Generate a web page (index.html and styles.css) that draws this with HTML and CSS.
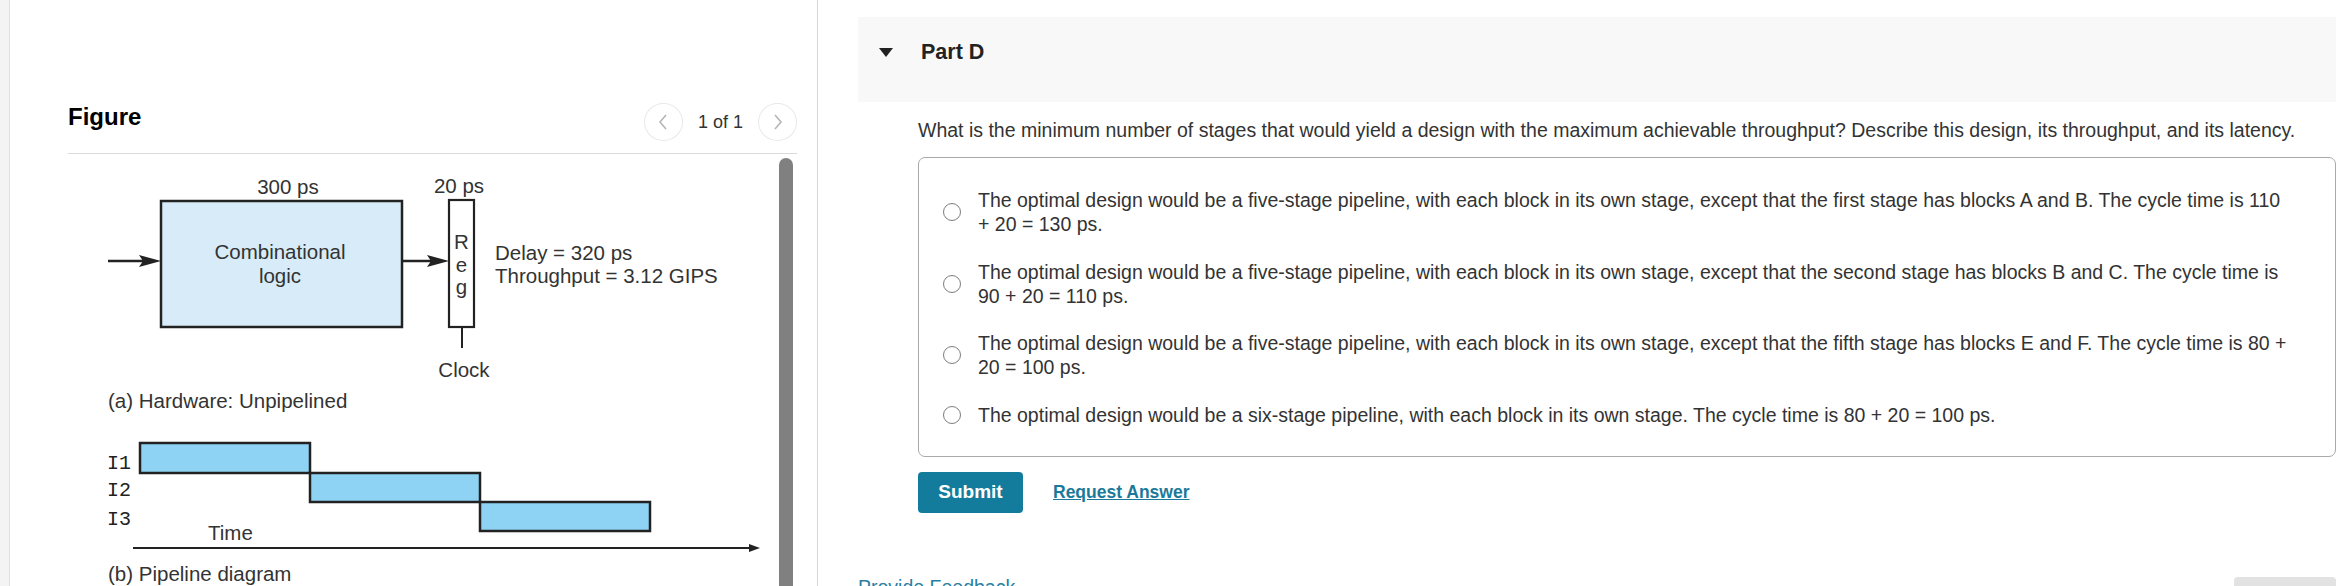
FILE: index.html
```html
<!DOCTYPE html>
<html lang="en">
<head>
<meta charset="utf-8">
<title>Part D</title>
<link rel="stylesheet" href="styles.css">
</head>
<body>
<div class="page">
  <div class="gutter"></div>
  <aside class="figure-panel">
    <div class="fig-header">
      <h2 class="fig-title">Figure</h2>
      <div class="pager">
        <button class="pager-btn" aria-label="Previous">
          <svg width="12" height="18" viewBox="0 0 12 18"><path d="M9 2 L3 9 L9 16" class="chev"/></svg>
        </button>
        <span class="pager-count">1 of 1</span>
        <button class="pager-btn" aria-label="Next">
          <svg width="12" height="18" viewBox="0 0 12 18"><path d="M3 2 L9 9 L3 16" class="chev"/></svg>
        </button>
      </div>
    </div>
    <div class="fig-body">
      <svg class="diagram" width="711" height="432" viewBox="68 154 711 432">
        <text class="dg" x="288" y="194" text-anchor="middle">300 ps</text>
        <text class="dg" x="459" y="193" text-anchor="middle">20 ps</text>
        <line class="wire" x1="108" y1="261" x2="145" y2="261"/>
        <polygon class="head" points="139,255 161,261 139,267 143,261"/>
        <rect class="comb" x="161" y="201" width="241" height="126"/>
        <text class="dg" x="280" y="259" text-anchor="middle">Combinational</text>
        <text class="dg" x="280" y="283" text-anchor="middle">logic</text>
        <line class="wire" x1="402" y1="261" x2="433" y2="261"/>
        <polygon class="head" points="427,255 449,261 427,267 431,261"/>
        <rect class="reg" x="449" y="200" width="25" height="127"/>
        <text class="dg" x="461.5" y="249" text-anchor="middle">R</text>
        <text class="dg" x="461.5" y="272" text-anchor="middle">e</text>
        <text class="dg" x="461.5" y="294" text-anchor="middle">g</text>
        <line class="thin" x1="462" y1="327" x2="462" y2="348"/>
        <text class="dg" x="464" y="377" text-anchor="middle">Clock</text>
        <text class="dg" x="495" y="260">Delay = 320 ps</text>
        <text class="dg" x="495" y="283">Throughput = 3.12 GIPS</text>
        <text class="dg" x="108" y="408">(a) Hardware: Unpipelined</text>
        <text class="dg mono" x="107" y="469">I1</text>
        <text class="dg mono" x="107" y="496">I2</text>
        <text class="dg mono" x="107" y="525">I3</text>
        <rect class="bar" x="140" y="443" width="170" height="30"/>
        <rect class="bar" x="310" y="473" width="170" height="29"/>
        <rect class="bar" x="480" y="502" width="170" height="29"/>
        <text class="dg" x="208" y="540">Time</text>
        <line class="axis" x1="133" y1="548" x2="752" y2="548"/>
        <polygon class="head" points="749,544 760,548 749,552"/>
        <text class="dg" x="108" y="581">(b) Pipeline diagram</text>
      </svg>
      <div class="scroll-thumb"></div>
    </div>
  </aside>
  <main class="main">
    <div class="part-header">
      <span class="caret"></span>
      <h3 class="part-title">Part D</h3>
    </div>
    <div class="part-body">
      <p class="question">What is the minimum number of stages that would yield a design with the maximum achievable throughput? Describe this design, its throughput, and its latency.</p>
      <div class="options">
        <label class="option"><span class="radio"></span><span class="opt-text">The optimal design would be a five-stage pipeline, with each block in its own stage, except that the first stage has blocks A and B. The cycle time is 110 + 20 = 130 ps.</span></label>
        <label class="option"><span class="radio"></span><span class="opt-text">The optimal design would be a five-stage pipeline, with each block in its own stage, except that the second stage has blocks B and C. The cycle time is 90 + 20 = 110 ps.</span></label>
        <label class="option"><span class="radio"></span><span class="opt-text">The optimal design would be a five-stage pipeline, with each block in its own stage, except that the fifth stage has blocks E and F. The cycle time is 80 + 20 = 100 ps.</span></label>
        <label class="option"><span class="radio"></span><span class="opt-text">The optimal design would be a six-stage pipeline, with each block in its own stage. The cycle time is 80 + 20 = 100 ps.</span></label>
      </div>
      <div class="actions">
        <button class="submit">Submit</button>
        <a class="request" href="#">Request Answer</a>
      </div>
    </div>
    <div class="footer">
      <a class="feedback" href="#">Provide Feedback</a>
      <span class="next-btn"></span>
    </div>
  </main>
</div>
</body>
</html>
```

FILE: styles.css
```css
html, body {
  margin: 0;
  padding: 0;
  height: 586px;
  overflow: hidden;
  background: #fff;
  font-family: "Liberation Sans", Arial, Helvetica, sans-serif;
  color: #333;
}

.page {
  display: flex;
  align-items: flex-start;
  height: 586px;
  overflow: hidden;
}

.gutter {
  width: 9px;
  height: 586px;
  flex: none;
  background: #f4f4f4;
}

.figure-panel {
  width: 809px;
  height: 586px;
  flex: none;
  box-sizing: border-box;
  border-left: 1px solid #e1e1e1;
  border-right: 1px solid #cfd6dc;
  padding: 0 20px 0 58px;
  overflow: hidden;
}

.fig-header {
  margin-top: 99px;
  height: 46px;
  padding-bottom: 8px;
  border-bottom: 1px solid #dadada;
  display: flex;
  justify-content: space-between;
  align-items: center;
}

.fig-title {
  margin: 0 0 10px 0;
  font-size: 24px;
  line-height: 28px;
  font-weight: bold;
  color: #000;
}

.pager {
  display: flex;
  align-items: center;
  gap: 15px;
}

.pager-btn {
  width: 39px;
  height: 38px;
  border-radius: 50%;
  border: 1px solid #e8e8e8;
  background: #fff;
  padding: 0;
  display: flex;
  align-items: center;
  justify-content: center;
}

.chev {
  fill: none;
  stroke: #b5b5b5;
  stroke-width: 1.6;
}

.pager-count {
  font-size: 18px;
  color: #333;
}

.fig-body {
  display: flex;
  align-items: flex-start;
}

.diagram {
  display: block;
  flex: none;
}

.scroll-thumb {
  width: 14px;
  height: 440px;
  margin-top: 4px;
  background: #808080;
  border-radius: 7px 7px 0 0;
}

.dg {
  font-family: "Liberation Sans", Arial, sans-serif;
  font-size: 20.5px;
  fill: #333;
}

.dg.mono {
  font-family: "Liberation Mono", "Courier New", monospace;
  font-size: 20px;
  fill: #222;
}

.wire {
  stroke: #222;
  stroke-width: 2.5;
}

.thin {
  stroke: #222;
  stroke-width: 2;
}

.axis {
  stroke: #222;
  stroke-width: 1.8;
}

.head {
  fill: #222;
}

.comb {
  fill: #d7ecf8;
  stroke: #222;
  stroke-width: 2.5;
}

.reg {
  fill: #fff;
  stroke: #222;
  stroke-width: 2.2;
}

.bar {
  fill: #8fd3f4;
  stroke: #222;
  stroke-width: 2.5;
}

.main {
  flex: 1;
  min-width: 0;
  height: 586px;
  overflow: hidden;
  padding: 17px 16px 0 40px;
}

.part-header {
  height: 85px;
  box-sizing: border-box;
  background: #f8f8f8;
  padding: 23px 0 0 21px;
  display: flex;
  align-items: flex-start;
}

.caret {
  width: 0;
  height: 0;
  margin-top: 8px;
  border-left: 7.5px solid transparent;
  border-right: 7.5px solid transparent;
  border-top: 9px solid #222;
}

.part-title {
  margin: 0 0 0 28px;
  font-size: 21.5px;
  line-height: 24px;
  font-weight: bold;
  color: #222;
}

.part-body {
  padding-left: 60px;
}

.question {
  margin: 16px 0 0 0;
  font-size: 19.5px;
  line-height: 24px;
  color: #333;
}

.options {
  margin-top: 15px;
  border: 1px solid #a9a9a9;
  border-radius: 7px;
  padding: 30px 44px 29px 24px;
  display: flex;
  flex-direction: column;
  gap: 23.5px;
}

.option {
  display: flex;
  align-items: center;
  font-size: 19.5px;
  line-height: 24px;
  color: #333;
}

.radio {
  flex: none;
  width: 16px;
  height: 16px;
  border: 1.5px solid #7d7d7d;
  border-radius: 50%;
  margin-right: 17px;
  background: #fff;
}

.actions {
  margin-top: 15px;
  display: flex;
  align-items: center;
}

.submit {
  width: 105px;
  height: 41px;
  border: none;
  border-radius: 4px;
  background: #137c9c;
  color: #fff;
  font-family: "Liberation Sans", Arial, sans-serif;
  font-size: 19px;
  font-weight: bold;
  padding: 0;
}

.request {
  margin-left: 30px;
  font-size: 17.5px;
  font-weight: bold;
  color: #1b7a9a;
  text-decoration: underline;
}

.footer {
  margin-top: 62px;
  display: flex;
  justify-content: space-between;
  align-items: flex-start;
}

.feedback {
  font-size: 19.5px;
  line-height: 24px;
  color: #2a7fa3;
  text-decoration: none;
}

.next-btn {
  width: 102px;
  height: 40px;
  margin-top: 2px;
  background: #e2e2e2;
  border-radius: 4px 4px 0 0;
}
```
